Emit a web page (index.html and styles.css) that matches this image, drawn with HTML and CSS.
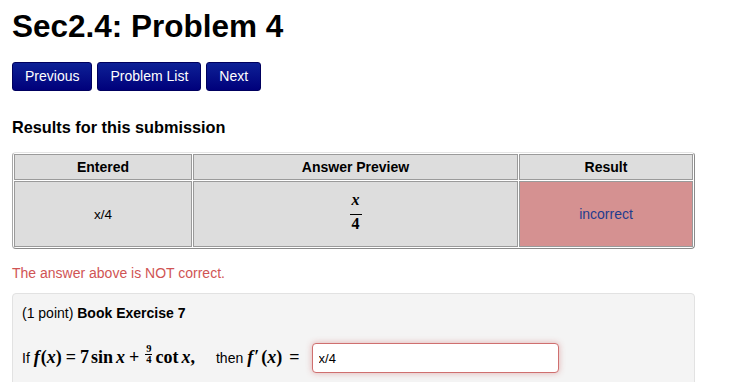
FILE: index.html
```html
<!DOCTYPE html>
<html>
<head>
<meta charset="utf-8">
<title>Sec2.4: Problem 4</title>
<link rel="stylesheet" href="styles.css">
</head>
<body>
<div class="page">
  <h1 class="title">Sec2.4: Problem 4</h1>
  <div class="nav">
    <a class="btn">Previous</a>
    <a class="btn">Problem List</a>
    <a class="btn">Next</a>
  </div>
  <h3 class="results-title">Results for this submission</h3>
  <table class="attempts">
    <tr>
      <th class="c1">Entered</th>
      <th class="c2">Answer Preview</th>
      <th class="c3">Result</th>
    </tr>
    <tr>
      <td class="entered">x/4</td>
      <td class="preview"><span class="frac big"><span class="num mi">x</span><span class="den">4</span></span></td>
      <td class="incorrect">incorrect</td>
    </tr>
  </table>
  <div class="alert">The answer above is NOT correct.</div>
  <div class="problem">
    <p class="head">(1 point) <b>Book Exercise 7</b></p>
    <p class="q">If <span class="m"><span class="mi f">f</span><span class="mo">(</span><span class="mi">x</span><span class="mo">)</span><span class="rel">=</span><span class="mn">7</span><span class="fn">sin</span><span class="mi">x</span><span class="bin">+</span><span class="frac small"><span class="num">9</span><span class="den">4</span></span><span class="fn">cot</span><span class="mi">x</span><span class="punct">,</span></span><span class="then">then</span><span class="m"><span class="mi f">f</span><span class="prime">′</span><span class="mo">(</span><span class="mi">x</span><span class="mo">)</span><span class="rel last">=</span></span><input class="answer" type="text" value="x/4"></p>
  </div>
</div>
</body>
</html>
```

FILE: styles.css
```css
html { overflow: hidden; }
body {
  margin: 0;
  background: #fff;
  color: #000;
  font-family: "Liberation Sans", Arial, sans-serif;
  font-size: 14px;
}
.page {
  width: 683px;
  padding: 0 12px;
}
.title {
  margin: 7px 0 0;
  font-size: 31.5px;
  line-height: 38px;
  font-weight: bold;
}
.nav {
  display: flex;
  gap: 5px;
  margin-top: 17px;
}
.btn {
  display: inline-block;
  height: 29px;
  box-sizing: border-box;
  padding: 0 12px;
  line-height: 27px;
  font-size: 14px;
  color: #fff;
  background: linear-gradient(to bottom, #0d2196, #00007b);
  border: 1px solid #00005e;
  border-radius: 3px;
}
.results-title {
  margin: 26px 0 0;
  font-size: 16.3px;
  line-height: 20px;
  font-weight: bold;
}
.attempts {
  margin-top: 15px;
  width: 683px;
  table-layout: fixed;
  border-collapse: separate;
  border-spacing: 1px;
  border: 1px solid #8a8a8a;
  border-top-color: #e4e4e4;
  border-left-color: #a8a8a8;
  border-radius: 4px;
  background: #fff;
}
.attempts th, .attempts td {
  box-sizing: border-box;
  border: 1px solid #9a9a9a;
  background: #dddddd;
  text-align: center;
  vertical-align: middle;
  padding: 0;
}
.attempts th {
  height: 26px;
  font-size: 14px;
  font-weight: bold;
  line-height: 18px;
}
.attempts th.c1 { width: 178px; }
.attempts th.c2 { width: 325px; }
.attempts th.c3 { width: 174px; }
.attempts td { height: 66px; }
.attempts td.entered { font-size: 13.5px; }
.attempts td.incorrect {
  background: #d59191;
  color: #1f3c8e;
  font-size: 14px;
}
.alert {
  margin-top: 14px;
  line-height: 20px;
  color: #d05454;
}
.problem {
  margin-top: 10px;
  background: #f4f4f4;
  border: 1px solid #e2e2e2;
  border-radius: 4px;
  padding: 9px 9px 20px;
}
.head {
  margin: 0;
  line-height: 20px;
}
.q {
  margin: 20px 0 0;
  line-height: 20px;
}
.m {
  font-family: "Liberation Serif", "Times New Roman", serif;
  font-weight: bold;
  font-size: 18px;
}
.mi { font-style: italic; }
.mi.f { padding-right: 1px; }
.rel { margin: 0 4px; }
.rel.last { margin: 0 0 0 7px; }
.bin { margin: 0 6px 0 4px; }
.fn { margin: 0 3px 0 2px; }
.punct { margin-right: 21px; }
.prime { font-style: normal; margin-right: 2px; }
.then { margin-right: 4px; }
.frac {
  display: inline-flex;
  flex-direction: column;
  align-items: center;
  font-family: "Liberation Serif", "Times New Roman", serif;
  font-weight: bold;
  font-style: normal;
}
.frac .num { border-bottom: 1px solid #000; padding: 0 1px; }
.frac.big {
  vertical-align: middle;
  font-size: 16px;
  line-height: 16px;
}
.frac.big .num { padding: 0 2px 6px; font-style: italic; border-bottom-width: 1.3px; }
.frac.big .den { padding: 1px 0 5px; }
.frac.small {
  font-size: 10.5px;
  line-height: 8px;
  vertical-align: 11px;
  margin-right: 1px;
}
.frac.small .num { padding: 0 1px 1px; }
.frac.small .den { padding-top: 1px; }
.answer {
  box-sizing: border-box;
  width: 247px;
  height: 30px;
  margin-left: 12px;
  padding: 4px 6px;
  font-family: "Liberation Sans", Arial, sans-serif;
  font-size: 13px;
  color: #000;
  background: #fff;
  border: 1px solid #cf6f6f;
  border-radius: 4px;
  box-shadow: 0 0 6px rgba(205, 90, 90, 0.45);
  outline: none;
}
```
